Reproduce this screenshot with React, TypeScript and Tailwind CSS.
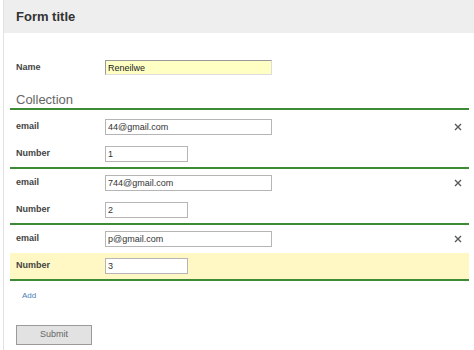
import React from 'react';

const entries = [
  { email: '44@gmail.com', number: '1', active: false },
  { email: '744@gmail.com', number: '2', active: false },
  { email: 'p@gmail.com', number: '3', active: true },
];

const CloseIcon: React.FC = () => (
  <svg width="8" height="8" viewBox="0 0 8 8" className="text-[#555]">
    <path d="M1 1 L7 7 M7 1 L1 7" stroke="currentColor" strokeWidth="1.3" />
  </svg>
);

const App: React.FC = () => {
  return (
    <div className="w-[474px] h-[350px] bg-white font-['Liberation_Sans',Arial,sans-serif] overflow-hidden">
      <div className="ml-[3px] h-full border-l border-[#e2e2e2]">
        <div className="h-[33px] bg-[#eeeeee] flex items-center pl-[12px]">
          <h1 className="text-[13px] font-bold text-[#333]">Form title</h1>
        </div>

        <div className="mt-[27px] h-[15px] flex items-center pl-[12px]">
          <label className="w-[89px] text-[9px] font-bold text-[#444]">Name</label>
          <input
            readOnly
            value="Reneilwe"
            className="w-[167px] h-[15px] px-[2px] text-[9px] text-[#222] bg-[#ffffc4] border border-[#ddd] border-t-[#999] border-l-[#999] outline-none"
          />
        </div>

        <div className="mx-[6px] mr-[5px] mt-[17px] mb-[3px] border-b-2 border-[#3f8a35]">
          <h2 className="leading-[16px] text-[13px] text-[#666] pl-[6px]">Collection</h2>
        </div>

        <div className="ml-[6px] mr-[5px]">
          {entries.map((e, i) => (
            <div key={i} className="border-b-2 border-[#3f8a35]">
              <div className="h-[28px] flex items-center pl-[6px]">
                <span className="w-[89px] text-[9px] font-bold text-[#444]">email</span>
                <input
                  readOnly
                  value={e.email}
                  className="w-[167px] h-[16px] px-[2px] text-[9px] text-[#333] bg-white border border-[#b5b5b5] outline-none"
                />
                <div className="flex-1" />
                <div className="mr-[7px] flex items-center">
                  <CloseIcon />
                </div>
              </div>
              <div className={`h-[26px] flex items-center pl-[6px] ${e.active ? 'bg-[#fff8c4]' : ''}`}>
                <span className="w-[89px] text-[9px] font-bold text-[#444]">Number</span>
                <input
                  readOnly
                  value={e.number}
                  className="w-[83px] h-[16px] px-[2px] text-[9px] text-[#333] bg-white border border-[#b5b5b5] outline-none"
                />
              </div>
            </div>
          ))}
        </div>

        <div className="mt-[10px] pl-[18px] h-[10px] flex items-center">
          <a className="text-[8px] text-[#4a7ebb]">Add</a>
        </div>

        <div className="mt-[19px] pl-[12px]">
          <button className="w-[76px] h-[20px] bg-[#e2e2e2] border border-[#9a9a9a] text-[9px] text-[#666]">
            Submit
          </button>
        </div>
      </div>
    </div>
  );
};

export default App;
